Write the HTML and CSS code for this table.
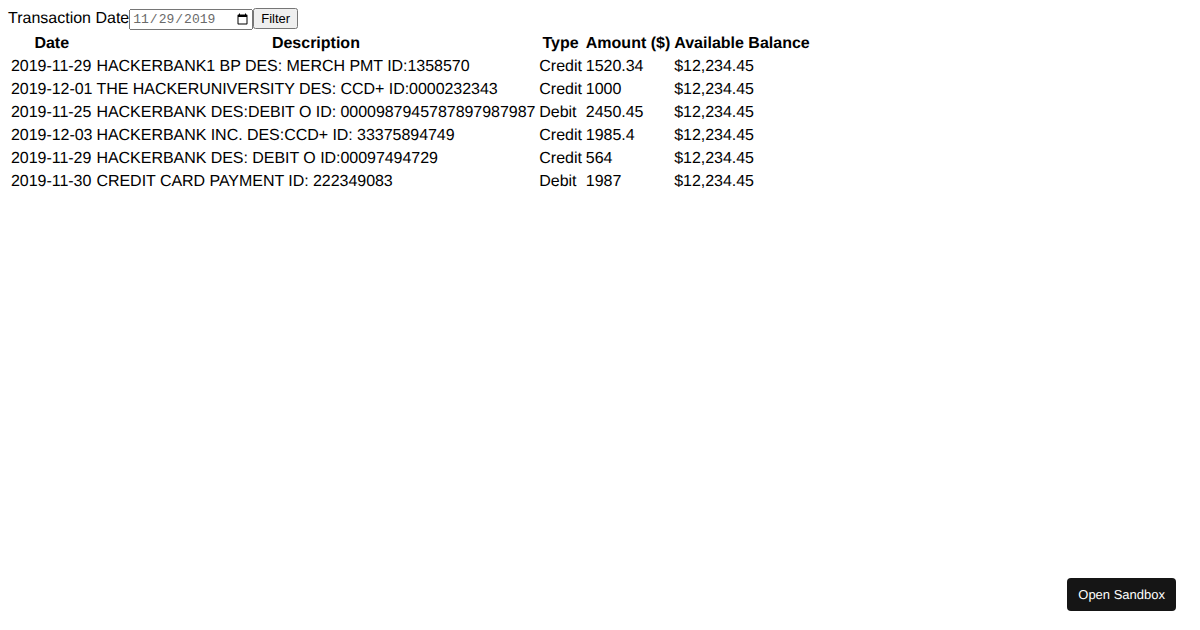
FILE: index.html
```html
<!DOCTYPE html>
<html>
<head>
<meta charset="utf-8">
<link rel="stylesheet" href="styles.css">
</head>
<body>
<div class="filter">
  <label for="d">Transaction Date</label><input id="d" class="date" type="date" value="2019-11-29"><button class="btn">Filter</button>
</div>
<table class="tx">
  <thead>
    <tr><th>Date</th><th>Description</th><th>Type</th><th>Amount ($)</th><th>Available Balance</th></tr>
  </thead>
  <tbody>
    <tr><td>2019-11-29</td><td>HACKERBANK1 BP DES: MERCH PMT ID:1358570</td><td>Credit</td><td>1520.34</td><td>$12,234.45</td></tr>
    <tr><td>2019-12-01</td><td>THE HACKERUNIVERSITY DES: CCD+ ID:0000232343</td><td>Credit</td><td>1000</td><td>$12,234.45</td></tr>
    <tr><td>2019-11-25</td><td>HACKERBANK DES:DEBIT O ID: 00009879457878979879​87</td><td>Debit</td><td>2450.45</td><td>$12,234.45</td></tr>
    <tr><td>2019-12-03</td><td>HACKERBANK INC. DES:CCD+ ID: 33375894749</td><td>Credit</td><td>1985.4</td><td>$12,234.45</td></tr>
    <tr><td>2019-11-29</td><td>HACKERBANK DES: DEBIT O ID:00097494729</td><td>Credit</td><td>564</td><td>$12,234.45</td></tr>
    <tr><td>2019-11-30</td><td>CREDIT CARD PAYMENT ID: 222349083</td><td>Debit</td><td>1987</td><td>$12,234.45</td></tr>
  </tbody>
</table>
<a class="sandbox" href="#">Open Sandbox</a>
</body>
</html>
```

FILE: styles.css
```css
body {
  margin: 8px;
  font-family: "Liberation Sans", Arial, sans-serif;
  font-size: 16px;
  color: #000;
  background: #fff;
  text-rendering: geometricPrecision;
}
.filter {
  line-height: 18px;
}
.date {
  font-family: "Liberation Mono", monospace;
  font-size: 13px;
  color: #6a6a6a;
  width: 124px;
  box-sizing: border-box;
}
.btn {
  font-family: "Liberation Sans", Arial, sans-serif;
  font-size: 13px;
}
.tx {
  font-family: "Liberation Sans", Arial, sans-serif;
  margin-top: 1px;
}
.tx th,
.tx td {
  line-height: 19px;
}
.tx td {
  letter-spacing: -0.04px;
}
.sandbox {
  position: fixed;
  right: 24px;
  bottom: 19px;
  background: #151515;
  color: #fff;
  text-decoration: none;
  font-family: "Liberation Sans", Arial, sans-serif;
  font-size: 13px;
  line-height: 15px;
  padding: 9px 11px;
  border-radius: 4px;
}
```
